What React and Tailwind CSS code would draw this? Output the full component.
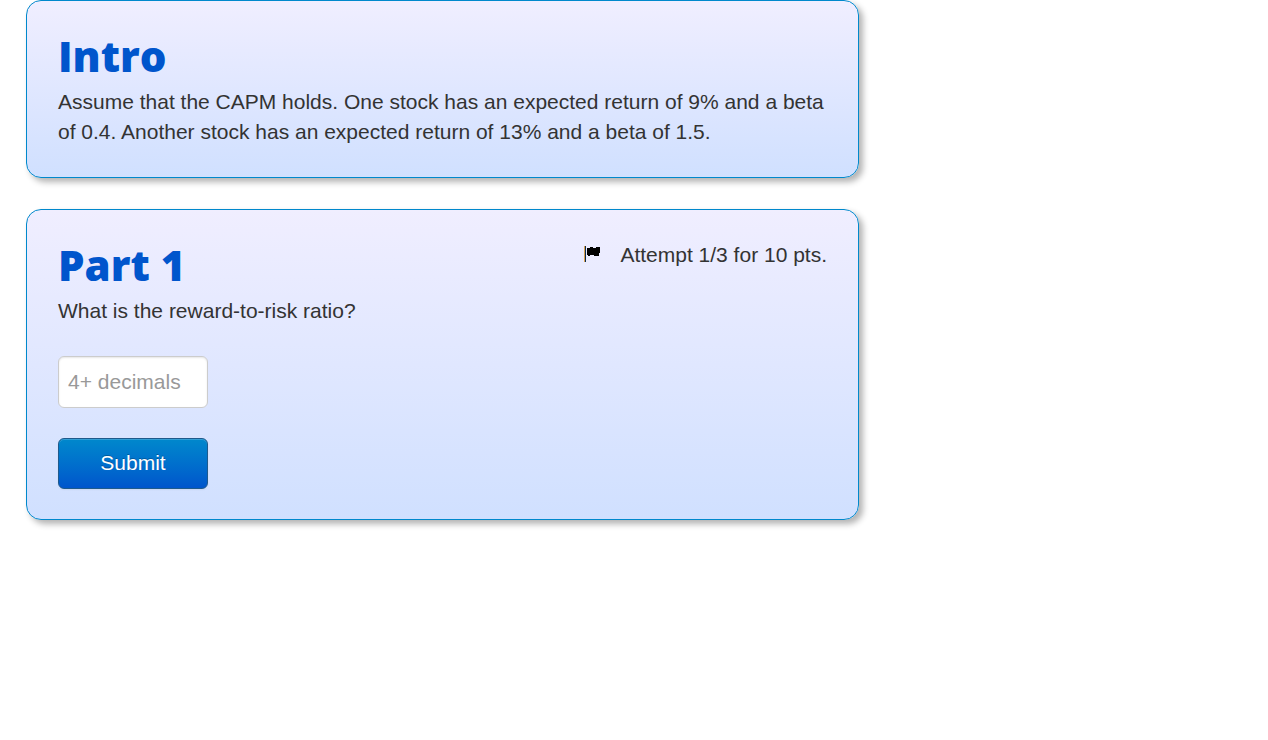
import { useState } from "react";

const FlagIcon = () => (
  <svg
    className="shrink-0"
    width="17"
    height="20"
    viewBox="0 0 17 20"
    shapeRendering="crispEdges"
    aria-hidden="true"
  >
    <rect x="1" y="1" width="1" height="16" fill="#d9a050" />
    <rect x="2" y="1" width="1" height="16" fill="#0b2a4a" />
    <path
      d="M4 3H6L7 2H9L10 3H12L13 2H17V7L16 8V10L15 11H11L10 10H7L6 11H5L4 10Z"
      fill="#000"
    />
  </svg>
);

const Card = ({ title, aside, children }) => (
  <section className="rounded-[15px] border border-[#0088cc] bg-linear-to-b from-[#f0eeff] to-[#d0e0ff] px-[31px] py-[30px] shadow-[4px_4px_6px_rgba(0,0,0,0.3)]">
    <div className="flex items-start justify-between">
      <h1 className="font-['Arial_Black','Open_Sans',sans-serif] text-[42px] leading-[50px] font-extrabold text-[#0055cc] pb-1.5">
        {title}
      </h1>
      {aside}
    </div>
    {children}
  </section>
);

const App = () => {
  const [answer, setAnswer] = useState("");

  return (
    <main className="flex max-w-[859px] flex-col gap-[31px] pb-8 pl-[26px] font-['Liberation_Sans',Arial,sans-serif] text-[21px] leading-[30px] text-[#333333]">
      <Card title="Intro">
        <p>
          Assume that the CAPM holds. One stock has an expected return of 9% and
          a beta of 0.4. Another stock has an expected return of 13% and a beta
          of 1.5.
        </p>
      </Card>

      <Card
        title="Part 1"
        aside={
          <div className="flex items-center gap-5">
            <FlagIcon />
            <span>Attempt 1/3 for 10 pts.</span>
          </div>
        }
      >
        <form
          className="flex flex-col items-start gap-[30px]"
          onSubmit={(e) => e.preventDefault()}
        >
          <label htmlFor="answer">What is the reward-to-risk ratio?</label>
          <input
            id="answer"
            type="text"
            name="answer"
            placeholder="4+ decimals"
            value={answer}
            onChange={(e) => setAnswer(e.target.value)}
            className="h-[52px] w-[150px] rounded-md border border-[#cccccc] bg-white px-[9px] shadow-[inset_0_1px_2px_rgba(0,0,0,0.1)] placeholder:text-[#999999]"
          />
          <button
            type="submit"
            className="h-[51px] w-[150px] rounded-md border border-[#1f5a8c] bg-linear-to-b from-[#0088cc] to-[#0055cc] pb-0.5 text-white shadow-[inset_0_1px_0_rgba(255,255,255,0.2),0_1px_2px_rgba(0,0,0,0.05)] text-shadow-[0_-1px_0_rgba(0,0,0,0.25)]"
          >
            Submit
          </button>
        </form>
      </Card>
    </main>
  );
};

export default App;
